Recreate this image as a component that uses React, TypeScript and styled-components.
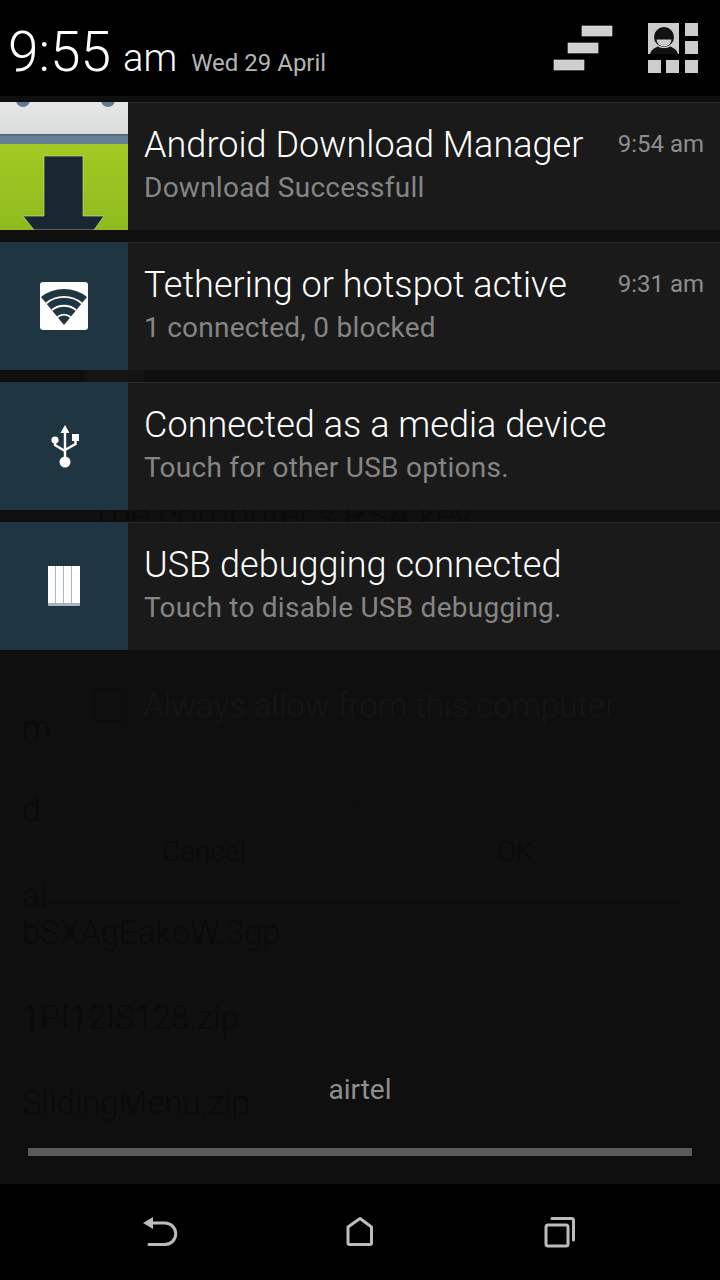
import React from 'react';
import styled, { createGlobalStyle } from 'styled-components';

const GlobalStyle = createGlobalStyle`
  html, body {
    margin: 0;
    padding: 0;
    background: #000;
  }
  * {
    box-sizing: border-box;
  }
`;

const Screen = styled.div`
  width: 720px;
  height: 1280px;
  display: flex;
  flex-direction: column;
  overflow: hidden;
  background: #000;
  font-family: Roboto, "Liberation Sans", sans-serif;
`;

// top bar with clock and quick settings
const Header = styled.header`
  height: 96px;
  flex: none;
  display: flex;
  align-items: flex-start;
  justify-content: space-between;
  background: #000;
`;

const Clock = styled.div`
  display: flex;
  align-items: baseline;
  padding: 19px 0 0 8px;
  line-height: 66px;
`;

const ClockTime = styled.span`
  font-size: 55px;
  font-weight: 300;
  color: #fff;
`;

const ClockSuffix = styled.span`
  font-size: 38px;
  font-weight: 300;
  color: #fff;
  margin-left: 12px;
`;

const ClockDate = styled.span`
  font-size: 24px;
  color: #b4b4b4;
  margin-left: 14px;
`;

const HeaderIcons = styled.div`
  display: flex;
  align-items: flex-start;
  gap: 35px;
  padding: 23px 22px 0 0;
`;

const Panel = styled.main`
  position: relative;
  flex: 1;
  display: flex;
  flex-direction: column;
  gap: 12px;
  padding: 6px 0 28px;
  background: #0f0f0f;
`;

// the dialog and file list dimmed behind the shade
const Ghost = styled.div<{ $x: number; $y: number; $size?: number; $light?: boolean }>`
  position: absolute;
  left: ${(p) => p.$x}px;
  top: ${(p) => p.$y - 96}px;
  font-size: ${(p) => p.$size ?? 33}px;
  line-height: 40px;
  font-weight: 300;
  white-space: nowrap;
  color: ${(p) => (p.$light ? '#151515' : '#0a0a0a')};
`;

const GhostBox = styled.div<{ $x: number; $y: number; $w: number; $h: number; $tone?: string }>`
  position: absolute;
  left: ${(p) => p.$x}px;
  top: ${(p) => p.$y - 96}px;
  width: ${(p) => p.$w}px;
  height: ${(p) => p.$h}px;
  background: ${(p) => p.$tone ?? '#0d0d0d'};
`;

const GhostCheck = styled.div`
  position: absolute;
  left: 94px;
  top: ${689 - 96}px;
  width: 32px;
  height: 32px;
  border: 1px solid #0b0b0b;
`;

const Row = styled.article`
  position: relative;
  flex: none;
  height: 128px;
  display: flex;
  background: #1a1a1a;
  border-top: 1px solid #2a2a2a;
`;

const Thumb = styled.div<{ $flush?: boolean }>`
  flex: none;
  width: 128px;
  height: 128px;
  margin-top: -1px;
  display: flex;
  align-items: center;
  justify-content: center;
  background: ${(p) => (p.$flush ? 'transparent' : '#1f3541')};
`;

const RowBody = styled.div`
  flex: 1;
  min-width: 0;
  padding: 19px 16px 0 16px;
`;

const RowTop = styled.div`
  display: flex;
  justify-content: space-between;
`;

const Title = styled.div`
  font-size: 36px;
  line-height: 46px;
  font-weight: 300;
  letter-spacing: 0.04px;
  color: #fff;
  white-space: nowrap;
`;

const When = styled.div`
  font-size: 24px;
  line-height: 44px;
  color: #8e8e8e;
  white-space: nowrap;
`;

const Subtitle = styled.div`
  font-size: 28px;
  line-height: 34px;
  margin-top: 3px;
  letter-spacing: 0.25px;
  color: #858585;
  white-space: nowrap;
`;

const Carrier = styled.div`
  position: relative;
  margin-top: auto;
  text-align: center;
  font-size: 28px;
  line-height: 34px;
  color: #8f8f8f;
`;

const Slider = styled.div`
  position: relative;
  height: 8px;
  margin: 29px 28px 0;
  background: #5a5a5a;
`;

const NavBar = styled.nav`
  height: 96px;
  flex: none;
  display: grid;
  grid-template-columns: repeat(3, 200px);
  justify-content: center;
  align-items: center;
  background: #000;
`;

const NavButton = styled.div`
  display: flex;
  justify-content: center;
`;

// icons, drawn in their own page coordinates
const StairsIcon = () => (
  <svg width="60" height="50" viewBox="553 24 60 50">
    <g fill="#cfcfcf" stroke="#e6e6e6" strokeWidth="0.6">
      <rect x="582" y="27" width="30" height="10" />
      <rect x="568" y="44" width="30" height="10" />
      <rect x="554" y="61" width="30" height="10" />
    </g>
  </svg>
);

const ProfileGridIcon = () => (
  <svg width="50" height="50" viewBox="648 23 50 50">
    <g fill="#cdcdcd">
      <rect x="648" y="23" width="31" height="31" />
      <rect x="685" y="23" width="13" height="13" />
      <rect x="685" y="41" width="13" height="13" />
      <rect x="648" y="60" width="13" height="13" />
      <rect x="666" y="60" width="13" height="13" />
      <rect x="685" y="60" width="13" height="13" />
    </g>
    <circle cx="664" cy="37" r="10" fill="#111" />
    <path d="M656.5 39.5 H671.5 A7.5 7 0 0 1 656.5 39.5 Z" fill="#cdcdcd" />
    <path d="M650 54 C651 50 654 48 658 46.5 C661 48.5 667 48.5 670 46.5 C674 48 677 50 678 54 Z" fill="#111" />
  </svg>
);

const DownloadArt = () => (
  <svg width="128" height="128" viewBox="0 102 128 128">
    <defs>
      <linearGradient id="paper" x1="0" y1="0" x2="0" y2="1">
        <stop offset="0" stopColor="#e6e8e7" />
        <stop offset="1" stopColor="#dadcdb" />
      </linearGradient>
      <linearGradient id="leaf" x1="0" y1="0" x2="0" y2="1">
        <stop offset="0" stopColor="#a3ca23" />
        <stop offset="1" stopColor="#8fbb1f" />
      </linearGradient>
    </defs>
    <rect x="0" y="102" width="128" height="32" fill="url(#paper)" />
    <circle cx="23" cy="100" r="7" fill="#5f7b8e" />
    <circle cx="108" cy="100" r="7" fill="#5f7b8e" />
    <rect x="0" y="134" width="128" height="10" fill="#668093" />
    <rect x="0" y="134" width="128" height="1.5" fill="#4e6474" />
    <rect x="0" y="144" width="128" height="86" fill="url(#leaf)" />
    <path d="M44 156 H83 V216 H104 L94 230 H34 L23 216 H44 Z" fill="#1a2632" stroke="#c4d98a" strokeWidth="0.7" />
  </svg>
);

const HotspotIcon = () => (
  <svg width="48" height="48" viewBox="40 282 48 48">
    <rect x="40" y="282" width="48" height="48" rx="3" fill="#fff" />
    <path d="M64 325 L41 297 A37 37 0 0 1 87 297 Z" fill="#1f3541" />
    <g fill="none" stroke="#fff" strokeWidth="1.8">
      <path d="M46 303.5 A28 28 0 0 1 82 303.5" />
      <path d="M52 310 A19 19 0 0 1 76 310" />
      <path d="M57.5 317 A10 10 0 0 1 70.5 317" />
    </g>
  </svg>
);

const UsbIcon = () => (
  <svg width="40" height="48" viewBox="44 422 40 48">
    <g fill="#fff">
      <path d="M65 425 L69.5 433 H60.5 Z" />
      <circle cx="65" cy="462" r="5.5" />
      <circle cx="55" cy="440" r="3.6" />
      <rect x="72" y="434" width="7" height="7" />
    </g>
    <g fill="none" stroke="#fff" strokeWidth="2.4">
      <path d="M65 431 V458" />
      <path d="M55 441 V445 L65 451" />
      <path d="M75.5 440 V444 L65 450" />
    </g>
  </svg>
);

const DebugIcon = () => (
  <svg width="32" height="40" viewBox="48 566 32 40">
    <rect x="48" y="566" width="32" height="40" rx="1" fill="#a9b6bc" />
    <g fill="#fff">
      <rect x="48" y="566" width="7" height="37" />
      <rect x="56" y="566" width="7" height="37" />
      <rect x="64" y="566" width="7" height="37" />
      <rect x="72" y="566" width="8" height="37" />
    </g>
  </svg>
);

const BackIcon = () => (
  <svg width="40" height="34" viewBox="140 1215 40 34">
    <path d="M143 1223 L153 1217 V1229 Z" fill="#bcbcbc" />
    <path d="M152 1223 H165 A10.500 10.500 0 0 1 165 1244.500 H149" fill="none" stroke="#bcbcbc" strokeWidth="3" strokeLinecap="round" />
  </svg>
);

const HomeIcon = () => (
  <svg width="30" height="34" viewBox="345 1215 30 34">
    <path d="M360 1218.500 L371.500 1227 V1243 A1.500 1.500 0 0 1 370 1244.500 H349.500 A1.500 1.500 0 0 1 348 1243 V1227 Z" fill="none" stroke="#bcbcbc" strokeWidth="3" strokeLinejoin="round" />
  </svg>
);

const RecentsIcon = () => (
  <svg width="34" height="34" viewBox="543 1215 34 34">
    <rect x="546" y="1225" width="22" height="21" rx="2" fill="none" stroke="#bcbcbc" strokeWidth="3" />
    <path d="M552 1218.500 H571.500 A2 2 0 0 1 573.500 1220.500 V1240" fill="none" stroke="#bcbcbc" strokeWidth="3" strokeLinecap="round" />
  </svg>
);

const notifications = [
  { icon: <DownloadArt />, flush: true, title: 'Android Download Manager', text: 'Download Successfull', when: '9:54 am' },
  { icon: <HotspotIcon />, title: 'Tethering or hotspot active', text: '1 connected, 0 blocked', when: '9:31 am' },
  { icon: <UsbIcon />, title: 'Connected as a media device', text: 'Touch for other USB options.' },
  { icon: <DebugIcon />, title: 'USB debugging connected', text: 'Touch to disable USB debugging.' },
];

const App = () => {
  return (
    <Screen>
      <GlobalStyle />
      <Header>
        <Clock>
          <ClockTime>9:55</ClockTime>
          <ClockSuffix>am</ClockSuffix>
          <ClockDate>Wed 29 April</ClockDate>
        </Clock>
        <HeaderIcons>
          <StairsIcon />
          <ProfileGridIcon />
        </HeaderIcons>
      </Header>
      <Panel>
        <GhostBox $x={84} $y={370} $w={60} $h={12} $tone="#141414" />
        <Ghost $x={90} $y={496} $size={36}>The computer's RSA key</Ghost>
        <GhostCheck />
        <Ghost $x={143} $y={686} $size={33} $light>Always allow from this computer</Ghost>
        <Ghost $x={22} $y={708}>m</Ghost>
        <Ghost $x={22} $y={790}>d</Ghost>
        <GhostBox $x={50} $y={802} $w={620} $h={1} />
        <GhostBox $x={356} $y={802} $w={1} $h={92} />
        <Ghost $x={162} $y={832} $size={28}>Cancel</Ghost>
        <Ghost $x={497} $y={832} $size={28}>OK</Ghost>
        <Ghost $x={22} $y={876}>al</Ghost>
        <GhostBox $x={50} $y={900} $w={632} $h={5} />
        <Ghost $x={22} $y={913}>bSXAgEakoW.3gp</Ghost>
        <Ghost $x={22} $y={998}>1PI12IS128.zip</Ghost>
        <Ghost $x={22} $y={1083}>SlidingMenu.zip</Ghost>
        {notifications.map((n) => (
          <Row key={n.title}>
            <Thumb $flush={n.flush}>{n.icon}</Thumb>
            <RowBody>
              <RowTop>
                <Title>{n.title}</Title>
                {n.when && <When>{n.when}</When>}
              </RowTop>
              <Subtitle>{n.text}</Subtitle>
            </RowBody>
          </Row>
        ))}
        <Carrier>airtel</Carrier>
        <Slider />
      </Panel>
      <NavBar>
        <NavButton><BackIcon /></NavButton>
        <NavButton><HomeIcon /></NavButton>
        <NavButton><RecentsIcon /></NavButton>
      </NavBar>
    </Screen>
  );
};

export default App;
